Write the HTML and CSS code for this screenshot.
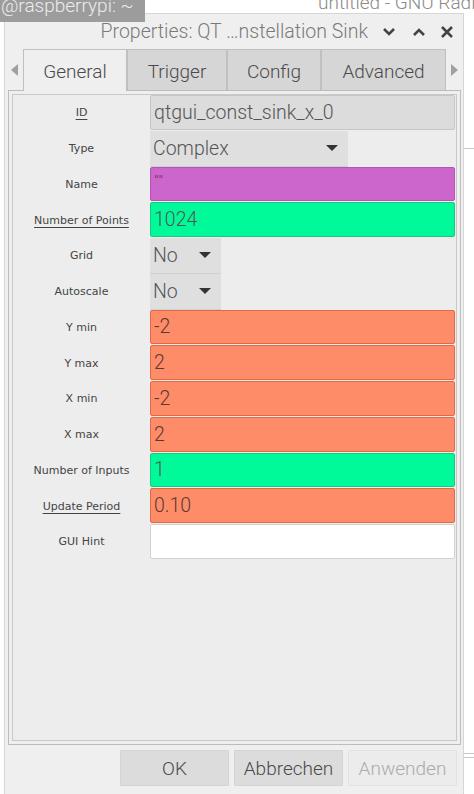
FILE: index.html
```html
<!DOCTYPE html>
<html lang="en">
<head>
  <meta charset="UTF-8">
  <title>Properties: QT Constellation Sink</title>
  <link rel="stylesheet" href="styles.css">
</head>
<body>
  <div class="desktop">
    <div class="term-tab">@raspberrypi: ~</div>
    <div class="app-title">untitled - GNU Radio</div>
    <div class="side-line top"></div>
    <div class="side-line bottom"></div>

    <div class="dialog">
      <div class="titlebar">
        <span class="title">Properties: QT …nstellation Sink</span>
        <span class="wm-btn">
          <svg width="14" height="10" viewBox="0 0 14 10"><path d="M2 2 L7 7 L12 2" fill="none" stroke="#444" stroke-width="2.6"/></svg>
        </span>
        <span class="wm-btn">
          <svg width="14" height="10" viewBox="0 0 14 10"><path d="M2 8 L7 3 L12 8" fill="none" stroke="#444" stroke-width="2.6"/></svg>
        </span>
        <span class="wm-btn close">
          <svg width="14" height="14" viewBox="0 0 14 14"><path d="M2 2 L12 12 M12 2 L2 12" fill="none" stroke="#444" stroke-width="2.6"/></svg>
        </span>
      </div>

      <div class="tabbar">
        <span class="tab-arrow">
          <svg width="8" height="12" viewBox="0 0 8 12"><path d="M7 0 L0 6 L7 12 Z" fill="#a0a0a0"/></svg>
        </span>
        <div class="tab active">General</div>
        <div class="tab">Trigger</div>
        <div class="tab">Config</div>
        <div class="tab">Advanced</div>
        <span class="tab-arrow">
          <svg width="8" height="12" viewBox="0 0 8 12"><path d="M1 0 L8 6 L1 12 Z" fill="#a0a0a0"/></svg>
        </span>
      </div>

      <div class="panel">
        <div class="panel-inner">
          <div class="form">
            <label class="ul">ID</label>
            <div class="field readonly">qtgui_const_sink_x_0</div>

            <label>Type</label>
            <div class="combo wide">Complex<span class="caret"></span></div>

            <label>Name</label>
            <div class="field string"><span class="small">""</span></div>

            <label class="ul">Number of Points</label>
            <div class="field int">1024</div>

            <label>Grid</label>
            <div class="combo narrow">No<span class="caret"></span></div>

            <label>Autoscale</label>
            <div class="combo narrow">No<span class="caret"></span></div>

            <label>Y min</label>
            <div class="field float">-2</div>

            <label>Y max</label>
            <div class="field float">2</div>

            <label>X min</label>
            <div class="field float">-2</div>

            <label>X max</label>
            <div class="field float">2</div>

            <label>Number of Inputs</label>
            <div class="field int">1</div>

            <label class="ul">Update Period</label>
            <div class="field float">0.10</div>

            <label>GUI Hint</label>
            <div class="field plain"></div>
          </div>
        </div>
      </div>

      <div class="buttons">
        <button class="btn">OK</button>
        <button class="btn">Abbrechen</button>
        <button class="btn disabled">Anwenden</button>
      </div>
    </div>
  </div>
</body>
</html>
```

FILE: styles.css
```css
body {
  margin: 0;
  padding: 0;
  background-color: #FFFFFF;
  font-family: Roboto, 'Liberation Sans', sans-serif;
  overflow: hidden;
}

.desktop {
  position: relative;
  width: 474px;
  height: 794px;
  overflow: hidden;
}

.term-tab {
  position: absolute;
  left: 0;
  top: 0;
  width: 145px;
  height: 22px;
  background-color: #9c9c9c;
  color: #ececec;
  font-size: 19px;
  font-weight: 300;
  line-height: 12px;
  padding-left: 1px;
  box-sizing: border-box;
  overflow: hidden;
  z-index: 2;
}

.app-title {
  position: absolute;
  left: 318px;
  top: -9px;
  color: #8a8a8a;
  font-size: 19px;
  font-weight: 300;
  white-space: nowrap;
}

.side-line {
  position: absolute;
  left: 464px;
  width: 10px;
  border-top: 1px solid #c8c8c8;
}

.side-line.top {
  top: 148px;
}

.side-line.bottom {
  top: 753px;
  height: 3px;
  border-bottom: 1px solid #c8c8c8;
}

.dialog {
  position: relative;
  margin: 13px 0 0 4px;
  width: 460px;
  height: 781px;
  box-sizing: border-box;
  background-color: #efefef;
  border: 1px solid #d6d6d6;
  border-bottom: none;
  display: flex;
  flex-direction: column;
}

.titlebar {
  height: 35px;
  display: flex;
  align-items: center;
  justify-content: flex-end;
  padding-right: 3px;
}

.title {
  color: #7a7a7a;
  font-size: 19.5px;
  font-weight: 300;
  margin-right: 6px;
  white-space: nowrap;
}

.wm-btn {
  width: 30px;
  display: flex;
  justify-content: center;
  align-items: center;
}

.wm-btn.close {
  width: 26px;
}

.tabbar {
  height: 41px;
  display: flex;
  align-items: flex-end;
  padding-left: 2px;
}

.tab-arrow {
  width: 16px;
  height: 41px;
  display: flex;
  align-items: center;
  justify-content: center;
}

.tab {
  height: 41px;
  box-sizing: border-box;
  background-color: #d6d6d6;
  border: 1px solid #c0c0c0;
  border-bottom: none;
  color: #4a4a4a;
  font-size: 19px;
  font-weight: 300;
  display: flex;
  align-items: center;
  justify-content: center;
  padding-top: 2px;
}

.tab:nth-child(2) { width: 104px; }
.tab:nth-child(3) { width: 100px; }
.tab:nth-child(4) { width: 94px; }
.tab:nth-child(5) { width: 125px; }

.tab.active {
  background-color: #efefef;
  height: 42px;
  margin-bottom: -1px;
  position: relative;
  z-index: 1;
}

.panel {
  margin: 0 2px 0 3px;
  height: 655px;
  box-sizing: border-box;
  border: 1px solid #bcbcbc;
  padding: 3px;
}

.panel-inner {
  height: 100%;
  box-sizing: border-box;
  border: 1px solid #c8c8c8;
  padding: 0 1px 0 0;
  background-color: #ededed;
}

.form {
  display: grid;
  grid-template-columns: 137px 1fr;
  grid-auto-rows: 35.75px;
}

.form label {
  font-family: 'DejaVu Sans', sans-serif;
  font-size: 11px;
  color: #444;
  display: flex;
  align-items: center;
  justify-content: center;
}

.form label.ul {
  text-decoration: underline;
  text-underline-offset: 3px;
}

.field {
  height: 34.75px;
  box-sizing: border-box;
  border: 1px solid #c8c8c8;
  border-radius: 2px;
  color: #555;
  font-size: 19.5px;
  font-weight: 300;
  padding-left: 3px;
  display: flex;
  align-items: center;
}

.field.readonly {
  background-color: #dcdcdc;
  border-color: #c6c6c6;
}

.field.string {
  background-color: #cc66cc;
  border-color: #b256b2;
  align-items: flex-start;
}

.field.string .small {
  font-family: 'DejaVu Sans', sans-serif;
  font-size: 10px;
  font-weight: 400;
  margin-top: 6px;
  color: #6a3a6a;
}

.field.int {
  background-color: #00fa9a;
  border-color: #1bc882;
}

.field.float {
  background-color: #ff8c69;
  border-color: #e06a48;
  color: #5a3a30;
}

.field.plain {
  background-color: #ffffff;
  border-color: #d2d2d2;
}

.combo {
  height: 35.75px;
  box-sizing: border-box;
  background-color: #dfdfdf;
  border-bottom: 1px solid #d0d0d0;
  color: #555;
  font-size: 19.5px;
  font-weight: 300;
  padding-left: 3px;
  display: flex;
  align-items: center;
  justify-content: space-between;
}

.combo.wide { width: 198px; }
.combo.narrow { width: 71px; }

.caret {
  width: 0;
  height: 0;
  border-left: 6px solid transparent;
  border-right: 6px solid transparent;
  border-top: 6px solid #333;
  margin-right: 10px;
}

.buttons {
  display: flex;
  justify-content: flex-end;
  gap: 5px;
  padding: 5px 6px 0 0;
}

.btn {
  width: 109px;
  height: 36px;
  background-color: #dcdcdc;
  border: 1px solid #d4d4d4;
  border-radius: 1px;
  color: #4a4a4a;
  font-family: Roboto, 'Liberation Sans', sans-serif;
  font-size: 19px;
  font-weight: 300;
  padding: 0;
}

.btn.disabled {
  background-color: #ececec;
  border-color: #e2e2e2;
  color: #ababab;
}
```
